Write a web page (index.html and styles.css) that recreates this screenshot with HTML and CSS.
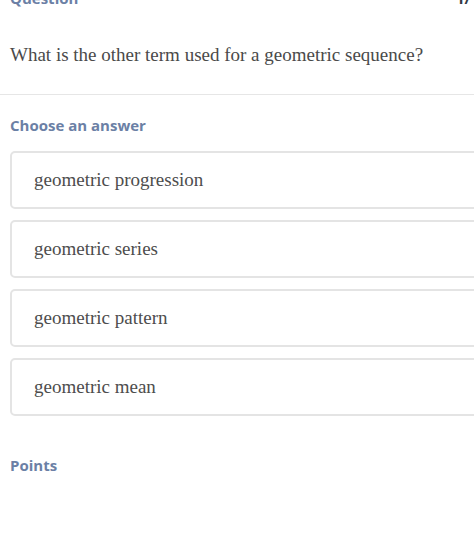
FILE: index.html
```html
<!DOCTYPE html>
<html lang="en">
<head>
<meta charset="utf-8">
<title>Question</title>
<link rel="stylesheet" href="styles.css">
</head>
<body>
<div class="page">
  <header class="top">
    <span class="label">Question</span>
    <span class="count">1/1</span>
  </header>
  <p class="question">What is the other term used for a geometric sequence?</p>
  <hr class="divider">
  <section class="answers">
    <h2 class="label">Choose an answer</h2>
    <ul class="options">
      <li class="option">geometric progression</li>
      <li class="option">geometric series</li>
      <li class="option">geometric pattern</li>
      <li class="option">geometric mean</li>
    </ul>
  </section>
  <h2 class="label points">Points</h2>
</div>
</body>
</html>
```
FILE: styles.css
```css
html, body {
  margin: 0;
  padding: 0;
  background: #ffffff;
  overflow: hidden;
}
.page {
  width: 474px;
  height: 554px;
  overflow: hidden;
  font-family: "Open Sans", "Liberation Sans", sans-serif;
}
.label {
  font-family: "Open Sans", "Liberation Sans", sans-serif;
  font-weight: 700;
  font-size: 15px;
  line-height: 20px;
  color: #6b80a5;
  margin: 0;
}
.top {
  display: flex;
  justify-content: space-between;
  width: 491px;
  padding-left: 10px;
  margin-top: -12px;
  height: 20px;
}
.count {
  font-weight: 700;
  font-size: 15px;
  line-height: 20px;
  color: #333a44;
  width: 45px;
}
.question {
  margin: 35px 0 0 10px;
  font-family: "Liberation Serif", "Times New Roman", serif;
  font-size: 19px;
  line-height: 24px;
  color: #4a4a4a;
}
.divider {
  border: 0;
  border-top: 1px solid #e6e6e6;
  margin: 27px 0 0 0;
  height: 0;
}
.answers {
  padding-left: 10px;
  margin-top: 20px;
}
.options {
  list-style: none;
  margin: 16px 0 0 0;
  padding: 0;
  display: flex;
  flex-direction: column;
  gap: 11px;
}
.option {
  width: 480px;
  height: 58px;
  box-sizing: border-box;
  border: 2px solid #e4e4e4;
  border-radius: 5px;
  padding-left: 22px;
  display: flex;
  align-items: center;
  font-family: "Liberation Serif", "Times New Roman", serif;
  font-size: 19px;
  color: #4d4d4d;
}
.points {
  margin: 39px 0 0 10px;
}
```
